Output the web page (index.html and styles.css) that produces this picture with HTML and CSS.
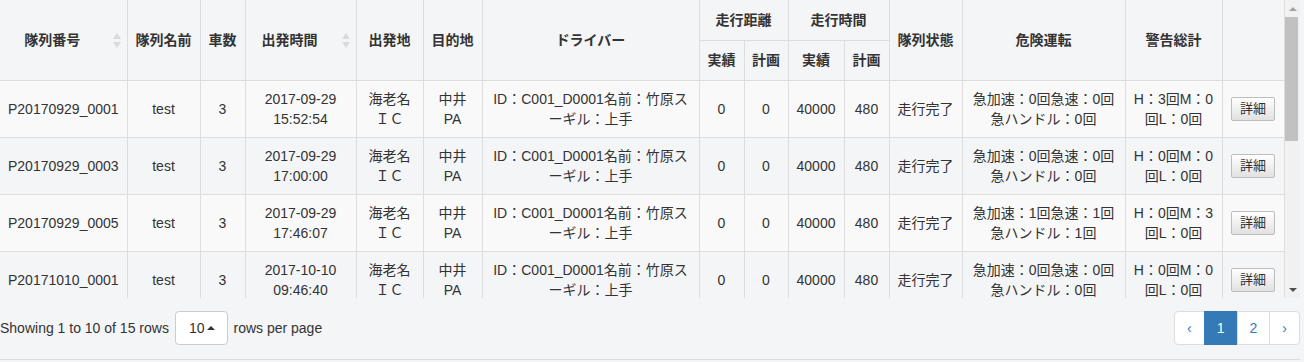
FILE: index.html
```html
<!DOCTYPE html>
<html lang="ja">
<head>
<meta charset="utf-8">
<title>隊列一覧</title>
<link rel="stylesheet" href="styles.css">
</head>
<body>
<div class="wrap">
  <div class="table-area">
    <div class="viewport">
      <table class="grid">
        <colgroup>
          <col class="w127"><col class="w73"><col class="w45"><col class="w111"><col class="w67"><col class="w59"><col class="w217"><col class="w45"><col class="w44"><col class="w56"><col class="w45"><col class="w73"><col class="w163"><col class="w97"><col class="w62">
        </colgroup>
        <thead>
          <tr>
            <th rowspan="2" class="first sortable">隊列番号<svg class="sort" width="8" height="15" viewBox="0 0 8 15"><path d="M4 0 L8 6 L0 6 Z" fill="#d9dadc"/><path d="M4 15 L8 9 L0 9 Z" fill="#d9dadc"/></svg></th>
            <th rowspan="2">隊列名前</th>
            <th rowspan="2">車数</th>
            <th rowspan="2" class="sortable">出発時間<svg class="sort" width="8" height="15" viewBox="0 0 8 15"><path d="M4 0 L8 6 L0 6 Z" fill="#d9dadc"/><path d="M4 15 L8 9 L0 9 Z" fill="#d9dadc"/></svg></th>
            <th rowspan="2">出発地</th>
            <th rowspan="2">目的地</th>
            <th rowspan="2">ドライバー</th>
            <th colspan="2">走行距離</th>
            <th colspan="2">走行時間</th>
            <th rowspan="2">隊列状態</th>
            <th rowspan="2">危険運転</th>
            <th rowspan="2">警告総計</th>
            <th rowspan="2"></th>
          </tr>
          <tr class="sub">
            <th>実績</th>
            <th>計画</th>
            <th>実績</th>
            <th>計画</th>
          </tr>
        </thead>
        <tbody>
          <tr>
            <td class="first">P20170929_0001</td><td>test</td><td>3</td><td>2017-09-29 15:52:54</td><td>海老名ＩＣ</td><td>中井PA</td><td>ID：C001_D0001名前：竹原スーギル：上手</td><td>0</td><td>0</td><td>40000</td><td>480</td><td>走行完了</td><td>急加速：0回急速：0回急ハンドル：0回</td><td>H：3回M：0回L：0回</td><td><button class="btn">詳細</button></td>
          </tr>
          <tr>
            <td class="first">P20170929_0003</td><td>test</td><td>3</td><td>2017-09-29 17:00:00</td><td>海老名ＩＣ</td><td>中井PA</td><td>ID：C001_D0001名前：竹原スーギル：上手</td><td>0</td><td>0</td><td>40000</td><td>480</td><td>走行完了</td><td>急加速：0回急速：0回急ハンドル：0回</td><td>H：0回M：0回L：0回</td><td><button class="btn">詳細</button></td>
          </tr>
          <tr>
            <td class="first">P20170929_0005</td><td>test</td><td>3</td><td>2017-09-29 17:46:07</td><td>海老名ＩＣ</td><td>中井PA</td><td>ID：C001_D0001名前：竹原スーギル：上手</td><td>0</td><td>0</td><td>40000</td><td>480</td><td>走行完了</td><td>急加速：1回急速：1回急ハンドル：1回</td><td>H：0回M：3回L：0回</td><td><button class="btn">詳細</button></td>
          </tr>
          <tr>
            <td class="first">P20171010_0001</td><td>test</td><td>3</td><td>2017-10-10 09:46:40</td><td>海老名ＩＣ</td><td>中井PA</td><td>ID：C001_D0001名前：竹原スーギル：上手</td><td>0</td><td>0</td><td>40000</td><td>480</td><td>走行完了</td><td>急加速：0回急速：0回急ハンドル：0回</td><td>H：0回M：0回L：0回</td><td><button class="btn">詳細</button></td>
          </tr>
        </tbody>
      </table>
    </div>
    <div class="vscroll" aria-hidden="true">
      <div class="sb-btn"><span class="tri-up"></span></div>
      <div class="sb-track"><div class="sb-thumb"></div></div>
      <div class="sb-btn"><span class="tri-down"></span></div>
    </div>
  </div>
  <div class="footer">
    <div class="detail">
      <span class="info">Showing 1 to 10 of 15 rows</span>
      <span class="page-size">10<span class="caret"></span></span>
      <span class="per">rows per page</span>
    </div>
    <ul class="pagination">
      <li><a>‹</a></li>
      <li class="active"><a>1</a></li>
      <li><a>2</a></li>
      <li><a>›</a></li>
    </ul>
  </div>
</div>
</body>
</html>
```

FILE: styles.css
```css
html, body {
  margin: 0;
  padding: 0;
}
body {
  background: #f4f5f7;
  font-family: "Liberation Sans", "Noto Sans CJK JP", sans-serif;
  font-size: 14px;
  line-height: 20px;
  color: #333;
}
.wrap {
  width: 1300px;
}
.table-area {
  display: flex;
  height: 298px;
}
.viewport {
  flex: none;
  width: 1285px;
  overflow: hidden;
}
.vscroll {
  flex: none;
  width: 15px;
  background: #f1f1f1;
  display: flex;
  flex-direction: column;
}
.sb-btn {
  height: 17px;
  display: flex;
  align-items: center;
  justify-content: center;
  flex: none;
}
.tri-up {
  width: 0;
  height: 0;
  border-left: 4px solid transparent;
  border-right: 4px solid transparent;
  border-bottom: 4px solid #a3a3a3;
}
.tri-down {
  width: 0;
  height: 0;
  border-left: 4px solid transparent;
  border-right: 4px solid transparent;
  border-top: 4px solid #505050;
}
.sb-track {
  flex: 1;
  padding: 0 2px 0 0;
}
.sb-thumb {
  height: 124px;
  background: #c1c1c1;
}
.grid {
  width: 1284px;
  table-layout: fixed;
  border-collapse: collapse;
}
.w127 { width: 127px; }
.w73 { width: 73px; }
.w45 { width: 45px; }
.w111 { width: 111px; }
.w67 { width: 67px; }
.w59 { width: 59px; }
.w217 { width: 217px; }
.w44 { width: 44px; }
.w56 { width: 56px; }
.w163 { width: 163px; }
.w97 { width: 97px; }
.w62 { width: 62px; }

.grid th,
.grid td {
  border: 1px solid #dddddd;
  text-align: center;
  vertical-align: middle;
  padding: 8px;
}
.grid th {
  font-weight: bold;
  line-height: 24px;
  padding: 8px 4px;
  position: relative;
  white-space: nowrap;
}
.grid thead tr:first-child th {
  border-top: none;
}
.grid tr.sub th {
  padding: 7px 2px 8px;
}
.grid .first {
  border-left: none;
}
.grid tbody tr:nth-child(odd) td {
  background: #f9f9f9;
}
.grid td {
  line-height: 20px;
}
.grid th.sortable {
  padding-left: 8px;
  padding-right: 30px;
}
.sort {
  position: absolute;
  right: 6px;
  top: 33px;
}
.btn {
  font-family: "Liberation Sans", "Noto Sans CJK JP", sans-serif;
  font-size: 13px;
  line-height: 18px;
  color: #333;
  padding: 2px 8px;
  border: 1px solid #bdbdbd;
  border-radius: 2px;
  background: linear-gradient(to bottom, #ffffff 0%, #e1e1e1 100%);
  cursor: pointer;
}
.footer {
  display: flex;
  justify-content: space-between;
  align-items: center;
  padding: 12px 0 14px;
  border-bottom: 1px solid #dcdcdc;
}
.detail {
  display: flex;
  align-items: center;
}
.page-size {
  display: inline-flex;
  align-items: center;
  height: 20px;
  margin: 1px 5px 0 6px;
  padding: 6px 12px 6px 13px;
  background: #fff;
  border: 1px solid #cccccc;
  border-radius: 4px;
  color: #333;
}
.caret {
  display: inline-block;
  width: 0;
  height: 0;
  margin-left: 3px;
  border-left: 4px solid transparent;
  border-right: 4px solid transparent;
  border-bottom: 4px solid #333;
}
.pagination {
  display: flex;
  list-style: none;
  margin: 0;
  padding: 0;
}
.pagination li a {
  display: block;
  padding: 6px 12px;
  line-height: 20px;
  color: #337ab7;
  background: #fff;
  border: 1px solid #dddddd;
  margin-left: -1px;
}
.pagination li:first-child a {
  margin-left: 0;
  border-radius: 4px 0 0 4px;
}
.pagination li:last-child a {
  border-radius: 0 4px 4px 0;
}
.pagination li.active a {
  background: #337ab7;
  border-color: #337ab7;
  color: #fff;
}
```
